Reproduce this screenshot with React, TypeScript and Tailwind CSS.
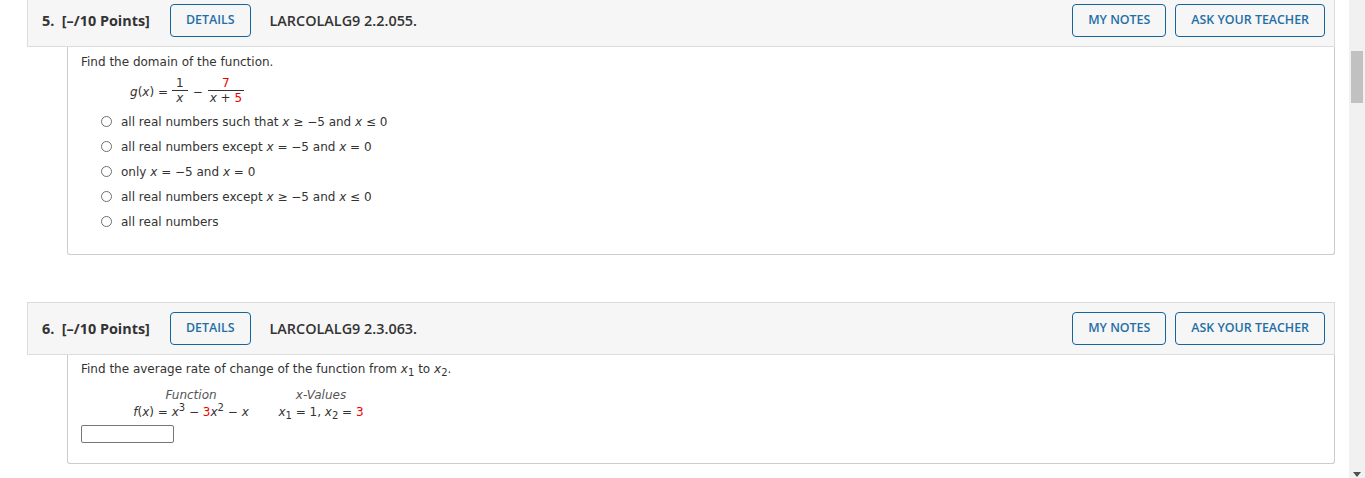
import React from "react";

const body = { fontFamily: '"DejaVu Sans", Verdana, sans-serif' };
const head = { fontFamily: '"Open Sans", "Liberation Sans", sans-serif' };

function Btn({ children }: { children: React.ReactNode }) {
  return (
    <div
      className="h-[33px] px-[15px] flex items-center rounded-[4px] border border-[#16659a] text-[#1f6fa6] text-[12.4px] font-semibold"
      style={head}
    >
      {children}
    </div>
  );
}

function Header({ num, code }: { num: string; code: string }) {
  return (
    <div className="h-[53px] bg-[#f6f6f6] border border-[#dcdcdc] flex items-center pl-[14px] pr-[9px]">
      <div className="text-[14.4px] font-bold text-[#333] w-[128px]" style={head}>
        {num}&nbsp;&nbsp;[–/10 Points]
      </div>
      <Btn>DETAILS</Btn>
      <div className="ml-[19px] text-[14.4px] font-semibold text-[#333]" style={head}>
        {code}
      </div>
      <div className="flex-1" />
      <Btn>MY NOTES</Btn>
      <div className="w-[9px]" />
      <Btn>ASK YOUR TEACHER</Btn>
    </div>
  );
}

const I = ({ children }: { children: React.ReactNode }) => <i>{children}</i>;
const R = ({ children }: { children: React.ReactNode }) => (
  <span className="text-[#ee0000]">{children}</span>
);

function Radio({ children }: { children: React.ReactNode }) {
  return (
    <div className="h-[25px] flex items-center">
      <div className="w-[11px] h-[11px] rounded-full border border-[#6f6f6f] ml-[20px] mr-[9px]" />
      <div>{children}</div>
    </div>
  );
}

export default function App() {
  return (
    <div className="w-[1365px] h-[478px] overflow-hidden bg-white flex">
      <div className="flex-1 pl-[27px] pr-[14px] -mt-[6px]">
        {/* Question 5 */}
        <Header num="5." code="LARCOLALG9 2.2.055." />
        <div
          className="ml-[40px] h-[208px] border-x border-b border-[#cccccc] rounded-b-[3px] pl-[13px] pt-[6px] text-[12px] text-[#333]"
          style={body}
        >
          <div className="h-[18px] leading-[18px]">Find the domain of the function.</div>
          <div className="h-[38px] flex items-center pl-[49px] pt-[3px]">
            <span>
              <I>g</I>(<I>x</I>) =
            </span>
            <span className="inline-flex flex-col items-center ml-[4px]">
              <span className="leading-[13px] px-[4px]">1</span>
              <span className="border-t border-[#333] w-full" />
              <span className="leading-[15px] px-[4px]">
                <I>x</I>
              </span>
            </span>
            <span className="ml-[5px] mr-[5px]">−</span>
            <span className="inline-flex flex-col items-center">
              <span className="leading-[13px] px-[2px]">
                <R>7</R>
              </span>
              <span className="border-t border-[#333] w-full" />
              <span className="leading-[15px] px-[2px]">
                <I>x</I> + <R>5</R>
              </span>
            </span>
          </div>
          <Radio>
            all real numbers such that <I>x</I> ≥ −5 and <I>x</I> ≤ 0
          </Radio>
          <Radio>
            all real numbers except <I>x</I> = −5 and <I>x</I> = 0
          </Radio>
          <Radio>
            only <I>x</I> = −5 and <I>x</I> = 0
          </Radio>
          <Radio>
            all real numbers except <I>x</I> ≥ −5 and <I>x</I> ≤ 0
          </Radio>
          <Radio>all real numbers</Radio>
        </div>

        <div className="h-[47px]" />

        {/* Question 6 */}
        <Header num="6." code="LARCOLALG9 2.3.063." />
        <div
          className="ml-[40px] h-[109px] border-x border-b border-[#cccccc] rounded-b-[3px] pl-[13px] pt-[5px] text-[12px] text-[#333]"
          style={body}
        >
          <div className="h-[18px] leading-[18px]">
            Find the average rate of change of the function from <I>x</I>
            <sub className="text-[10px]">1</sub> to <I>x</I>
            <sub className="text-[10px]">2</sub>.
          </div>
          <div className="flex ml-[45px] mt-[10px]">
            <div className="w-[130px] flex flex-col items-center">
              <div className="h-[15px] leading-[15px] text-[#555]">
                <I>Function</I>
              </div>
              <div className="h-[18px] leading-[18px]">
                <I>f</I>(<I>x</I>) = <I>x</I>
                <sup className="text-[10px]">3</sup> − <R>3</R>
                <I>x</I>
                <sup className="text-[10px]">2</sup> − <I>x</I>
              </div>
            </div>
            <div className="w-[15px]" />
            <div className="w-[100px] flex flex-col items-center">
              <div className="h-[15px] leading-[15px] text-[#555]">
                <I>x-Values</I>
              </div>
              <div className="h-[18px] leading-[18px]">
                <I>x</I>
                <sub className="text-[10px]">1</sub> = 1, <I>x</I>
                <sub className="text-[10px]">2</sub> = <R>3</R>
              </div>
            </div>
          </div>
          <div className="mt-[4px] w-[93px] h-[18px] border border-[#767676] rounded-[2px]" />
        </div>
      </div>
      {/* scrollbar */}
      <div className="w-[16px] h-full bg-[#f1f1f1] flex flex-col items-center">
        <div className="mt-[51px] w-[12px] h-[52px] bg-[#c1c1c1]" />
        <div className="flex-1" />
        <svg width="8" height="5" viewBox="0 0 8 5" className="mb-[1px]">
          <polygon points="0,0 8,0 4,5" fill="#505050" />
        </svg>
      </div>
    </div>
  );
}
